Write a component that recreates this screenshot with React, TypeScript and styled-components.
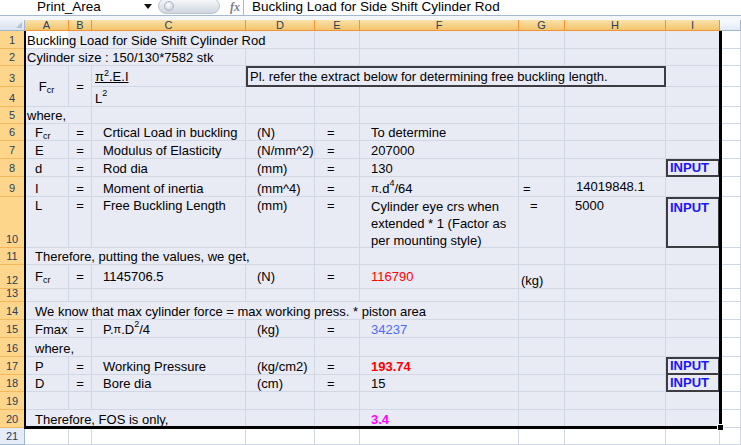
import * as React from 'react'
import styled, { createGlobalStyle } from 'styled-components'

const GlobalStyle = createGlobalStyle`
  html, body {
    margin: 0;
    padding: 0;
    background: #ffffff;
  }
  body {
    font-family: 'Liberation Sans', Arial, sans-serif;
    overflow: hidden;
  }
`

/* Column widths: row header, A..I, then the rest */
const COLS = [25, 44, 23, 154, 69, 45, 159, 46, 101, 54]
const ROWS = [18, 17, 21, 20, 17, 17, 18, 18, 20, 51, 17, 24, 13, 18, 18, 19, 18, 17, 18, 18, 17]
const LETTERS = ['A', 'B', 'C', 'D', 'E', 'F', 'G', 'H', 'I']
const LAST_USED_ROW = 20

const LAVENDER = '#e8eaf4'
const GRID = '#d0d7e5'

const Window = styled.div`
  width: 741px;
  height: 445px;
  overflow: hidden;
  display: flex;
  flex-direction: column;
`

/* Formula bar */
const FormulaBar = styled.div`
  display: flex;
  height: 15px;
  background: #ffffff;
  border-bottom: 1px solid #a7b9d1;
  overflow: hidden;
`

const NameBox = styled.div`
  width: 158px;
  display: flex;
  align-items: flex-start;
  justify-content: space-between;
  padding: 0 6px 0 37px;
  box-sizing: border-box;
  font-size: 13.5px;
  line-height: 14px;
  color: #000;
`

const DropArrow = styled.span`
  margin-top: 4px;
  width: 0;
  height: 0;
  border-left: 4px solid transparent;
  border-right: 4px solid transparent;
  border-top: 5px solid #111;
`

const Knob = styled.div`
  width: 62px;
  height: 16px;
  margin-top: -2px;
  border: 1px solid #b9c4d3;
  border-radius: 9px;
  box-sizing: border-box;
  background: linear-gradient(#f7f8fa, #dfe4ea 60%, #cfd6df);
  display: flex;
  align-items: center;
  padding-left: 5px;
`

const KnobDot = styled.span`
  width: 8px;
  height: 8px;
  border-radius: 50%;
  background: radial-gradient(circle at 40% 35%, #ffffff, #bfc7d1);
  border: 1px solid #aab4c2;
`

const FxLabel = styled.div`
  width: 23px;
  display: flex;
  justify-content: flex-end;
  padding-right: 3px;
  box-sizing: border-box;
  font-family: 'Liberation Serif', 'Times New Roman', serif;
  font-style: italic;
  font-weight: bold;
  font-size: 12px;
  line-height: 14px;
  color: #7a7f86;
`

const FormulaInput = styled.div`
  flex: 1;
  border-left: 1px solid #a7b9d1;
  padding-left: 8px;
  font-size: 13.5px;
  line-height: 14px;
  white-space: nowrap;
  color: #000;
`

const BarGap = styled.div`
  height: 4px;
  background: #f3f6fa;
`

/* Sheet grid */
const Sheet = styled.div`
  display: grid;
  grid-template-columns: ${COLS.map((w) => `${w}px`).join(' ')} 1fr;
  grid-template-rows: 11px ${ROWS.map((h) => `${h}px`).join(' ')};
  font-size: 13px;
  line-height: 15px;
  color: #000;
`

const Corner = styled.div`
  grid-column: 1;
  grid-row: 1;
  position: relative;
  background: linear-gradient(#eef3fa, #d8e2f0);
  border-right: 1px solid #9eb6ce;
  border-bottom: 1px solid #9eb6ce;
  &::after {
    content: '';
    position: absolute;
    right: 2px;
    bottom: 2px;
    width: 0;
    height: 0;
    border-left: 6px solid transparent;
    border-bottom: 6px solid #b4c3d6;
  }
`

const ColHead = styled.div<{ $active: boolean }>`
  display: flex;
  align-items: center;
  justify-content: center;
  font-size: 11px;
  line-height: 11px;
  color: #27405e;
  background: ${(p) =>
    p.$active ? 'linear-gradient(#fae0a9, #f3c56c)' : 'linear-gradient(#f9fbfd, #e2eaf5)'};
  border-right: 1px solid ${(p) => (p.$active ? '#f29436' : '#9eb6ce')};
  border-bottom: 1px solid ${(p) => (p.$active ? '#f29436' : '#9eb6ce')};
`

const RowHead = styled.div<{ $active: boolean }>`
  grid-column: 1;
  display: flex;
  align-items: flex-end;
  justify-content: center;
  padding-bottom: 2px;
  box-sizing: border-box;
  font-size: 11px;
  line-height: 12px;
  color: #27405e;
  background: ${(p) => (p.$active ? '#fdd68c' : '#e4ecf7')};
  border-bottom: 1px solid ${(p) => (p.$active ? '#f3b75c' : '#9eb6ce')};
  border-right: 1px solid ${(p) => (p.$active ? '#f29436' : '#9eb6ce')};
`

type VAlign = 'top' | 'center' | 'bottom'

const VMAP: Record<VAlign, string> = { top: 'flex-start', center: 'center', bottom: 'flex-end' }

const Cell = styled.div<{
  $bg: string
  $align: 'left' | 'center'
  $v: VAlign
  $pad: number
  $color: string
  $bold: boolean
  $box: boolean
  $noTop: boolean
}>`
  display: flex;
  align-items: ${(p) => VMAP[p.$v]};
  justify-content: ${(p) => (p.$align === 'center' ? 'center' : 'flex-start')};
  padding-left: ${(p) => p.$pad}px;
  padding-top: ${(p) => (p.$v === 'top' ? 1 : 0)}px;
  box-sizing: border-box;
  min-width: 0;
  white-space: nowrap;
  background: ${(p) => p.$bg};
  color: ${(p) => p.$color};
  font-weight: ${(p) => (p.$bold ? 'bold' : 'normal')};
  border-right: 1px solid ${GRID};
  border-bottom: 1px solid ${GRID};
  ${(p) =>
    p.$box &&
    `
    border: 2px solid #3c3d42;
    ${p.$noTop ? 'border-top: none;' : ''}
  `}
`

const Sub = styled.span`
  font-size: 9px;
  position: relative;
  top: 4px;
`

const Sup = styled.span`
  font-size: 9px;
  position: relative;
  top: -5px;
`

const Pi = styled.span`
  font-size: 11px;
`

const Under = styled.span`
  text-decoration: underline;
`

const Wrapped = styled.div`
  line-height: 17px;
  white-space: nowrap;
`

const Selection = styled.div`
  grid-column: 2 / 11;
  grid-row: 2 / ${LAST_USED_ROW + 2};
  position: relative;
  z-index: 3;
  pointer-events: none;
  margin: 0 -2px -1px -1px;
  border-left: 2px solid #000;
  border-right: 3px solid #000;
  border-bottom: 3px solid #000;
`

const FillHandle = styled.span`
  position: absolute;
  right: -5px;
  bottom: -5px;
  width: 5px;
  height: 5px;
  background: #000;
  border: 1px solid #fff;
`

type Spec = {
  c: number
  span?: number
  rs?: number
  content?: React.ReactNode
  pad?: number
  align?: 'left' | 'center'
  v?: VAlign
  color?: string
  bold?: boolean
  box?: boolean
  noTop?: boolean
}

const FCR = (
  <>
    F<Sub>cr</Sub>
  </>
)

const EQ_B: Spec = { c: 2, content: '=', align: 'center' }
const eqE = (v: VAlign = 'bottom'): Spec => ({ c: 5, content: '=', pad: 12, v })
const INPUT_BLUE = '#1a14ff'

const DATA: Record<number, Spec[]> = {
  1: [{ c: 1, span: 4, content: 'Buckling Load for Side Shift Cylinder Rod', pad: 2 }],
  2: [{ c: 1, span: 3, content: 'Cylinder size : 150/130*7582 stk', pad: 2 }],
  3: [
    { c: 1, rs: 2, content: FCR, align: 'center', v: 'center' },
    { c: 2, rs: 2, content: '=', align: 'center', v: 'center' },
    {
      c: 3,
      pad: 3,
      content: (
        <Under>
          π<Sup>2</Sup>.E.I
        </Under>
      ),
    },
    {
      c: 4,
      span: 5,
      box: true,
      pad: 2,
      v: 'center',
      content: 'Pl. refer the extract below for determining free buckling length.',
    },
  ],
  4: [
    {
      c: 3,
      pad: 3,
      content: (
        <>
          L<Sup>2</Sup>
        </>
      ),
    },
  ],
  5: [{ c: 1, span: 2, content: 'where,', pad: 2 }],
  6: [
    { c: 1, content: FCR, pad: 10 },
    EQ_B,
    { c: 3, content: 'Crtical Load in buckling', pad: 11 },
    { c: 4, content: '(N)', pad: 11 },
    eqE(),
    { c: 6, content: 'To determine', pad: 11 },
  ],
  7: [
    { c: 1, content: 'E', pad: 10 },
    EQ_B,
    { c: 3, content: 'Modulus of Elasticity', pad: 11 },
    { c: 4, content: '(N/mm^2)', pad: 11 },
    eqE(),
    { c: 6, content: '207000', pad: 11 },
  ],
  8: [
    { c: 1, content: 'd', pad: 10 },
    EQ_B,
    { c: 3, content: 'Rod dia', pad: 11 },
    { c: 4, content: '(mm)', pad: 11 },
    eqE(),
    { c: 6, content: '130', pad: 11 },
    { c: 9, content: 'INPUT', pad: 2, bold: true, color: INPUT_BLUE, box: true },
  ],
  9: [
    { c: 1, content: 'I', pad: 10 },
    EQ_B,
    { c: 3, content: 'Moment of inertia', pad: 11 },
    { c: 4, content: '(mm^4)', pad: 11 },
    eqE(),
    {
      c: 6,
      pad: 11,
      content: (
        <>
          <Pi>π</Pi>.d<Sup>4</Sup>/64
        </>
      ),
    },
    { c: 7, content: '=', pad: 4 },
    { c: 8, content: '14019848.1', pad: 11, v: 'center' },
  ],
  10: [
    { c: 1, content: 'L', pad: 10, v: 'top' },
    { c: 2, content: '=', align: 'center', v: 'top' },
    { c: 3, content: 'Free Buckling Length', pad: 11, v: 'top' },
    { c: 4, content: '(mm)', pad: 11, v: 'top' },
    eqE('top'),
    {
      c: 6,
      pad: 11,
      v: 'top',
      content: (
        <Wrapped>
          Cylinder eye crs when
          <br />
          extended * 1 (Factor as
          <br />
          per mounting style)
        </Wrapped>
      ),
    },
    { c: 7, content: '=', pad: 11, v: 'top' },
    { c: 8, content: '5000', pad: 10, v: 'top' },
    { c: 9, content: 'INPUT', pad: 2, bold: true, color: INPUT_BLUE, box: true, v: 'top' },
  ],
  11: [{ c: 1, span: 4, content: 'Therefore, putting the values, we get,', pad: 10 }],
  12: [
    { c: 1, content: FCR, pad: 10, v: 'center' },
    { c: 2, content: '=', align: 'center', v: 'center' },
    { c: 3, content: '1145706.5', pad: 11, v: 'center' },
    { c: 4, content: '(N)', pad: 11, v: 'center' },
    eqE('center'),
    { c: 6, content: '116790', pad: 11, v: 'center', color: '#ff0000' },
    { c: 7, content: '(kg)', pad: 2 },
  ],
  14: [
    {
      c: 1,
      span: 6,
      pad: 10,
      content: 'We know that max cylinder force = max working press. * piston area',
    },
  ],
  15: [
    { c: 1, content: 'Fmax', pad: 10 },
    EQ_B,
    {
      c: 3,
      pad: 11,
      content: (
        <>
          P.<Pi>π</Pi>.D<Sup>2</Sup>/4
        </>
      ),
    },
    { c: 4, content: '(kg)', pad: 11 },
    eqE(),
    { c: 6, content: '34237', pad: 11, color: '#4a6ef2' },
  ],
  16: [{ c: 1, span: 2, content: 'where,', pad: 10 }],
  17: [
    { c: 1, content: 'P', pad: 10 },
    EQ_B,
    { c: 3, content: 'Working Pressure', pad: 11 },
    { c: 4, content: '(kg/cm2)', pad: 11 },
    eqE(),
    { c: 6, content: '193.74', pad: 11, bold: true, color: '#ff0000' },
    { c: 9, content: 'INPUT', pad: 2, bold: true, color: INPUT_BLUE, box: true },
  ],
  18: [
    { c: 1, content: 'D', pad: 10 },
    EQ_B,
    { c: 3, content: 'Bore dia', pad: 11 },
    { c: 4, content: '(cm)', pad: 11 },
    eqE(),
    { c: 6, content: '15', pad: 11 },
    { c: 9, content: 'INPUT', pad: 2, bold: true, color: INPUT_BLUE, box: true, noTop: true },
  ],
  20: [
    { c: 1, span: 3, content: 'Therefore, FOS is only,', pad: 10 },
    { c: 6, content: '3.4', pad: 11, bold: true, color: '#ff00ff' },
  ],
}

function cellBackground(row: number, col: number): string {
  if (row > LAST_USED_ROW || col > 9) return '#ffffff'
  if (row === 1 && col === 1) return `linear-gradient(to right, #ffffff 43px, ${LAVENDER} 43px)`
  return LAVENDER
}

function buildCells(): React.ReactNode[] {
  const covered = new Set<string>()
  const out: React.ReactNode[] = []
  ROWS.forEach((_, i) => {
    const row = i + 1
    const specs = DATA[row] ?? []
    for (let col = 1; col <= 10; col++) {
      if (covered.has(`${row}:${col}`)) continue
      const spec = specs.find((s) => s.c === col)
      const span = spec?.span ?? 1
      const rs = spec?.rs ?? 1
      for (let r = row; r < row + rs; r++) {
        for (let c = col; c < col + span; c++) covered.add(`${r}:${c}`)
      }
      out.push(
        <Cell
          key={`${row}-${col}`}
          style={{
            gridColumn: `${col + 1} / span ${span}`,
            gridRow: `${row + 1} / span ${rs}`,
          }}
          $bg={cellBackground(row, col)}
          $align={spec?.align ?? 'left'}
          $v={spec?.v ?? 'bottom'}
          $pad={spec?.pad ?? 0}
          $color={spec?.color ?? '#000'}
          $bold={!!spec?.bold}
          $box={!!spec?.box}
          $noTop={!!spec?.noTop}
        >
          {spec?.content}
        </Cell>,
      )
    }
  })
  return out
}

const App = () => (
  <Window>
    <GlobalStyle />
    <FormulaBar>
      <NameBox>
        <span>Print_Area</span>
        <DropArrow />
      </NameBox>
      <Knob>
        <KnobDot />
      </Knob>
      <FxLabel>fx</FxLabel>
      <FormulaInput>Buckling Load for Side Shift Cylinder Rod</FormulaInput>
    </FormulaBar>
    <BarGap />
    <Sheet>
      <Corner />
      {LETTERS.map((l) => (
        <ColHead key={l} $active>
          {l}
        </ColHead>
      ))}
      <ColHead $active={false} />
      {ROWS.map((_, i) => (
        <RowHead key={i} style={{ gridRow: i + 2 }} $active={i + 1 <= LAST_USED_ROW}>
          {i + 1}
        </RowHead>
      ))}
      {buildCells()}
      <Selection>
        <FillHandle />
      </Selection>
    </Sheet>
  </Window>
)

export default App
